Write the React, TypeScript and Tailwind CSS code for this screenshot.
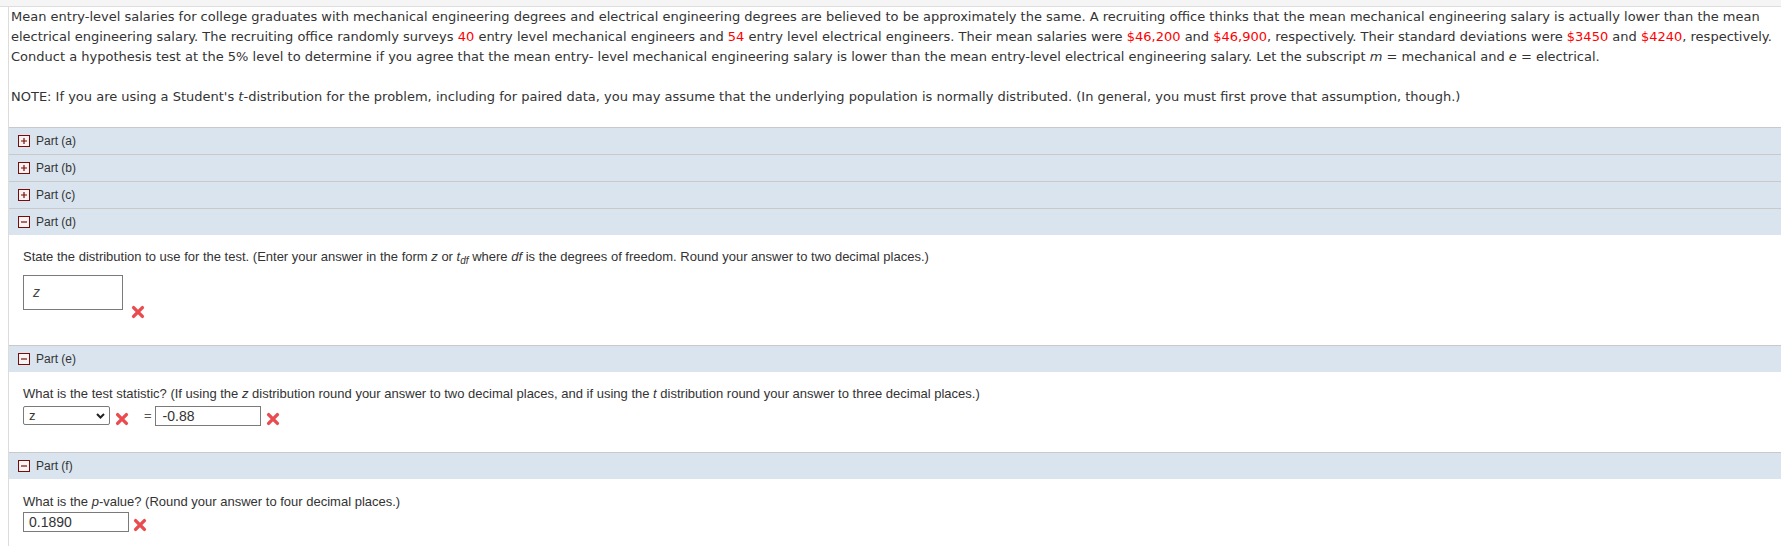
import React from "react";

const RedX = ({ className = "" }: { className?: string }) => (
  <svg className={className} width="14" height="14" viewBox="0 0 14 14">
    <path d="M2.6 2.6 L11.4 11.4 M11.4 2.6 L2.6 11.4" stroke="#ea4b4f" strokeWidth="3.4" strokeLinecap="round" fill="none" />
  </svg>
);

const Box = ({ open }: { open: boolean }) => (
  <svg width="12" height="12" viewBox="0 0 12 12" className="shrink-0">
    <rect x="0.5" y="0.5" width="11" height="11" fill="#f7f3f3" stroke="#7a0b0b" />
    <path d={open ? "M3 6 H9" : "M3 6 H9 M6 3 V9"} stroke="#7a0b0b" strokeWidth="1.2" fill="none" />
  </svg>
);

const Header = ({ label, open }: { label: string; open: boolean }) => (
  <div className="h-[27px] border-t border-[#c9c9c9] bg-[#d9e4ee] flex items-center pl-[9px] gap-[6px] text-[12px] text-[#333] font-['Liberation_Sans',Arial,sans-serif]">
    <Box open={open} />
    <span>{label}</span>
  </div>
);

const R = ({ children }: { children: React.ReactNode }) => <span className="text-[#f00]">{children}</span>;

export default function App() {
  return (
    <div className="w-[1781px] h-[546px] bg-white overflow-hidden">
      <div className="h-[7px] bg-[#f5f5f5] border-b border-[#dedede]" />
      <div className="ml-[8px] border-l border-[#dcdcdc] h-[539px]">
        <div className="pl-[2px] text-[13px] leading-[20px] text-[#333] font-['DejaVu_Sans',Verdana,sans-serif] whitespace-nowrap">
          <div>Mean entry-level salaries for college graduates with mechanical engineering degrees and electrical engineering degrees are believed to be approximately the same. A recruiting office thinks that the mean mechanical engineering salary is actually lower than the mean</div>
          <div>electrical engineering salary. The recruiting office randomly surveys <R>40</R> entry level mechanical engineers and <R>54</R> entry level electrical engineers. Their mean salaries were <R>$46,200</R> and <R>$46,900</R>, respectively. Their standard deviations were <R>$3450</R> and <R>$4240</R>, respectively.</div>
          <div>Conduct a hypothesis test at the 5% level to determine if you agree that the mean entry- level mechanical engineering salary is lower than the mean entry-level electrical engineering salary. Let the subscript <i>m</i> = mechanical and <i>e</i> = electrical.</div>
          <div className="h-[20px]" />
          <div>NOTE: If you are using a Student's <i>t</i>-distribution for the problem, including for paired data, you may assume that the underlying population is normally distributed. (In general, you must first prove that assumption, though.)</div>
        </div>
        <div className="mt-[20px]">
          <Header label="Part (a)" open={false} />
          <Header label="Part (b)" open={false} />
          <Header label="Part (c)" open={false} />
          <Header label="Part (d)" open={true} />
          <div className="h-[110px] pl-[14px] pt-[14px] font-['Liberation_Sans',Arial,sans-serif] text-[13px] text-[#333]">
            <div className="leading-[16px] h-[16px]">
              State the distribution to use for the test. (Enter your answer in the form <i>z</i> or <i>t</i><sub className="text-[10px] italic">df</sub> where <i>df</i> is the degrees of freedom. Round your answer to two decimal places.)
            </div>
            <div className="mt-[10px] flex items-start">
              <div className="w-[100px] h-[35px] border border-[#7a7a7a] flex items-center pl-[9px] italic text-[14px] text-[#444]">z</div>
              <RedX className="ml-[8px] mt-[30px]" />
            </div>
          </div>
          <Header label="Part (e)" open={true} />
          <div className="h-[80px] pl-[14px] pt-[14px] font-['Liberation_Sans',Arial,sans-serif] text-[13px] text-[#333]">
            <div className="leading-[16px] h-[16px]">
              What is the test statistic? (If using the <i>z</i> distribution round your answer to two decimal places, and if using the <i>t</i> distribution round your answer to three decimal places.)
            </div>
            <div className="mt-[4px] flex items-start">
              <div className="w-[87px] h-[19px] border border-[#7a7a7a] rounded-[2px] flex items-center justify-between pl-[5px] pr-[4px] text-[13px] text-[#333]">
                <span>z</span>
                <svg width="9" height="6" viewBox="0 0 9 6"><path d="M1 1 L4.5 4.5 L8 1" stroke="#222" strokeWidth="2" fill="none" /></svg>
              </div>
              <RedX className="ml-[5px] mt-[6px]" />
              <span className="ml-[15px] mt-[1px] text-[#555] leading-[17px]">=</span>
              <div className="ml-[3px] w-[106px] h-[20px] border border-[#7a7a7a] flex items-center pl-[7px] text-[14px] text-[#333]">-0.88</div>
              <RedX className="ml-[5px] mt-[6px]" />
            </div>
          </div>
          <Header label="Part (f)" open={true} />
          <div className="pl-[14px] pt-[15px] font-['Liberation_Sans',Arial,sans-serif] text-[13px] text-[#333]">
            <div className="leading-[16px] h-[16px]">
              What is the <i>p</i>-value? (Round your answer to four decimal places.)
            </div>
            <div className="mt-[2px] flex items-start">
              <div className="w-[106px] h-[20px] border border-[#7a7a7a] flex items-center pl-[5px] text-[14px] text-[#333]">0.1890</div>
              <RedX className="ml-[4px] mt-[6px]" />
            </div>
          </div>
        </div>
      </div>
    </div>
  );
}
